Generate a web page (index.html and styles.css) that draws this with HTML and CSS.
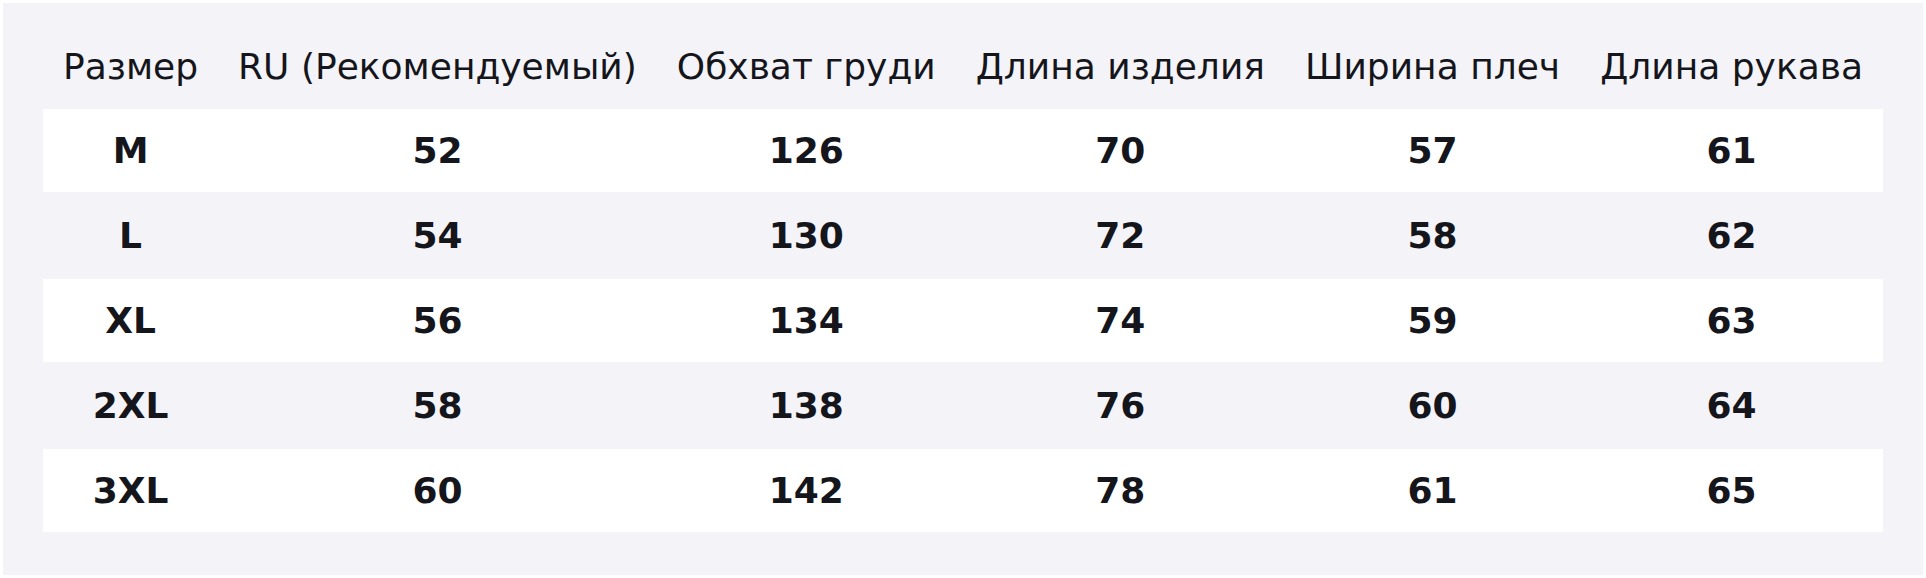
FILE: index.html
```html
<!DOCTYPE html>
<html lang="ru">
<head>
<meta charset="utf-8">
<title>Размеры</title>
<link rel="stylesheet" href="styles.css">
</head>
<body>
<div class="panel">
  <table class="sizes">
    <thead>
      <tr>
        <th>Размер</th>
        <th>RU (Рекомендуемый)</th>
        <th>Обхват груди</th>
        <th>Длина изделия</th>
        <th>Ширина плеч</th>
        <th>Длина рукава</th>
      </tr>
    </thead>
    <tbody>
      <tr class="light"><td>M</td><td>52</td><td>126</td><td>70</td><td>57</td><td>61</td></tr>
      <tr class="shade"><td>L</td><td>54</td><td>130</td><td>72</td><td>58</td><td>62</td></tr>
      <tr class="light"><td>XL</td><td>56</td><td>134</td><td>74</td><td>59</td><td>63</td></tr>
      <tr class="shade"><td>2XL</td><td>58</td><td>138</td><td>76</td><td>60</td><td>64</td></tr>
      <tr class="light"><td>3XL</td><td>60</td><td>142</td><td>78</td><td>61</td><td>65</td></tr>
    </tbody>
  </table>
</div>
</body>
</html>
```
FILE: styles.css
```css
html, body {
  margin: 0;
  padding: 0;
  background: #ffffff;
}
body {
  font-family: "DejaVu Sans", sans-serif;
  color: #15151c;
}
.panel {
  margin: 3px;
  width: 1920px;
  height: 572px;
  box-sizing: border-box;
  padding: 21px 40px 42px;
  background: #f4f4f8;
}
.sizes {
  width: 1840px;
  border-collapse: collapse;
  border-spacing: 0;
  font-size: 36px;
  line-height: normal;
}
.sizes th {
  font-weight: normal;
  padding: 22px 20px;
  text-align: center;
  white-space: nowrap;
}
.sizes td {
  font-weight: bold;
  padding: 0 20px;
  text-align: center;
  white-space: nowrap;
}
.sizes tr.light {
  height: 83px;
  background: #ffffff;
}
.sizes tr.shade {
  height: 87px;
  background: transparent;
}
```
